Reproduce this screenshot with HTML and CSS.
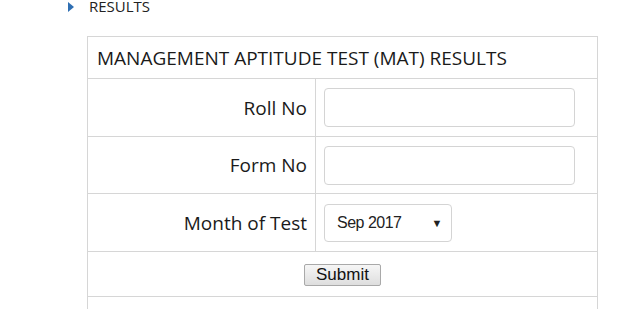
FILE: index.html
```html
<!DOCTYPE html>
<html>
<head>
<meta charset="utf-8">
<link rel="stylesheet" href="styles.css">
</head>
<body>
<div class="crumb"><span class="tri"></span><span class="crumb-text">RESULTS</span></div>
<table class="results">
  <tr><th colspan="2" class="head">MANAGEMENT APTITUDE TEST (MAT) RESULTS</th></tr>
  <tr class="row r1"><td class="label">Roll No</td><td class="field"><input class="txt" type="text"></td></tr>
  <tr class="row r2"><td class="label">Form No</td><td class="field"><input class="txt" type="text"></td></tr>
  <tr class="row r3"><td class="label">Month of Test</td><td class="field"><div class="sel"><span>Sep 2017</span><span class="arrow">&#9660;</span></div></td></tr>
  <tr class="btnrow"><td colspan="2" class="center"><button class="submit">Submit</button></td></tr>
  <tr class="last"><td colspan="2"></td></tr>
</table>
</body>
</html>
```
FILE: styles.css
```css
html, body { margin: 0; padding: 0; background: #fff; }
body { font-family: "Open Sans", sans-serif; color: #1a1a1a; overflow: hidden; height: 309px; }
.crumb { height: 36px; display: flex; align-items: flex-start; padding-left: 68px; box-sizing: border-box; }
.tri { width: 0; height: 0; border-top: 5px solid transparent; border-bottom: 5px solid transparent; border-left: 6px solid #2f6fb3; margin-top: 2px; }
.crumb-text { font-size: 15px; line-height: 15px; margin-left: 15px; margin-top: -1px; color: #222; }
.results { border-collapse: collapse; margin-left: 87px; width: 511px; }
.results th, .results td { border: 1px solid #d6d6d6; padding: 0; }
.head { height: 41px; text-align: left; font-weight: normal; font-size: 19px; padding-left: 9px !important; }
.r1 td, .r3 td { height: 57px; }
.r2 td { height: 56px; }
.label { width: 219px; text-align: right; font-size: 19px; padding-right: 8px !important; }
.field { padding-left: 8px !important; }
.txt { display: block; width: 251px; height: 39px; box-sizing: border-box; border: 1px solid #d4d4d4; border-radius: 4px; margin: 0; }
.sel { width: 128px; height: 38px; box-sizing: border-box; border: 1px solid #d4d4d4; border-radius: 4px; display: flex; align-items: center; justify-content: space-between; padding: 0 9px 0 12px; font-family: "Liberation Sans", Arial, sans-serif; font-size: 16px; letter-spacing: -0.5px; color: #222; }
.arrow { font-size: 11px; }
.btnrow td { height: 44px; }
.center { text-align: center; }
.submit { width: 77px; height: 22px; font-family: "Liberation Sans", Arial, sans-serif; font-size: 17px; line-height: 18px; color: #111; border: 1px solid #a9a9a9; border-radius: 2px; background: linear-gradient(#f6f6f6, #dedede); padding: 0; }
.last td { height: 30px; }
```
